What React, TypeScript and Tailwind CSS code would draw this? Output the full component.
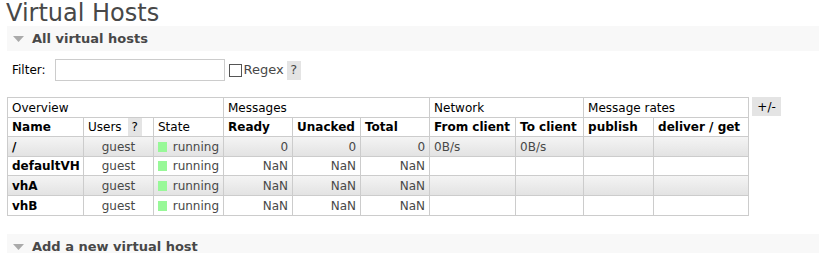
import React from "react";

const font = { fontFamily: '"DejaVu Sans", Verdana, sans-serif' };

function Tri() {
  return (
    <svg width="11" height="6" viewBox="0 0 11 6" className="mr-[8px]">
      <polygon points="0,0 11,0 5.5,6" fill="#aaaaaa" />
    </svg>
  );
}

type Row = {
  name: string;
  ready: string;
  unacked: string;
  total: string;
  from: string;
  to: string;
  h: string;
};

const rows: Row[] = [
  { name: "/", ready: "0", unacked: "0", total: "0", from: "0B/s", to: "0B/s", h: "h-[20px]" },
  { name: "defaultVH", ready: "NaN", unacked: "NaN", total: "NaN", from: "", to: "", h: "h-[19px]" },
  { name: "vhA", ready: "NaN", unacked: "NaN", total: "NaN", from: "", to: "", h: "h-[20px]" },
  { name: "vhB", ready: "NaN", unacked: "NaN", total: "NaN", from: "", to: "", h: "h-[20px]" },
];

export default function App() {
  const td = "border border-[#cccccc] px-[4px] leading-[14px] text-[12px] whitespace-nowrap";
  return (
    <div className="w-[819px] h-[253px] overflow-hidden bg-white text-[#484848]" style={font}>
      <h1 className="pl-[6px] text-[24px] leading-[26px] h-[26px] text-[#484848]">Virtual Hosts</h1>
      <div className="ml-[7px] h-[25px] bg-[#f8f8f8] flex items-center pl-[6px]">
        <Tri />
        <span className="text-[13px] font-bold text-[#484848]">All virtual hosts</span>
      </div>
      <div className="flex items-center h-[22px] mt-[8px] pl-[12px] text-[12px]">
        <span className="text-[#000]">Filter:</span>
        <div className="ml-[9px] w-[170px] h-[22px] border border-[#cccccc] bg-white" />
        <div className="ml-[4px] w-[13px] h-[13px] border border-[#555] bg-white" />
        <span className="ml-[2px] text-[13px]">Regex</span>
        <span className="ml-[3px] w-[14px] h-[19px] bg-[#e4e4e4] flex items-center justify-center text-[13px]">?</span>
      </div>
      <div className="flex items-start mt-[16px] ml-[7px]">
        <table className="border-collapse table-fixed w-[741px]">
          <colgroup>
            <col className="w-[76px]" />
            <col className="w-[70px]" />
            <col className="w-[70px]" />
            <col className="w-[69px]" />
            <col className="w-[68px]" />
            <col className="w-[69px]" />
            <col className="w-[86px]" />
            <col className="w-[68px]" />
            <col className="w-[70px]" />
            <col className="w-[95px]" />
          </colgroup>
          <thead>
            <tr className="h-[20px]">
              <th colSpan={3} className={`${td} text-left font-normal text-[#000]`}>Overview</th>
              <th colSpan={3} className={`${td} text-left font-normal text-[#000]`}>Messages</th>
              <th colSpan={2} className={`${td} text-left font-normal text-[#000]`}>Network</th>
              <th colSpan={2} className={`${td} text-left font-normal text-[#000]`}>Message rates</th>
            </tr>
            <tr className="h-[19px]">
              <th className={`${td} text-left font-bold text-[#000]`}>Name</th>
              <th className={`${td} text-left font-normal text-[#000]`}>
                <span className="flex items-center">
                  Users
                  <span className="ml-[6px] w-[14px] h-[18px] bg-[#e4e4e4] flex items-center justify-center">?</span>
                </span>
              </th>
              <th className={`${td} text-left font-normal text-[#000]`}>State</th>
              <th className={`${td} text-left font-bold text-[#000]`}>Ready</th>
              <th className={`${td} text-left font-bold text-[#000]`}>Unacked</th>
              <th className={`${td} text-left font-bold text-[#000]`}>Total</th>
              <th className={`${td} text-left font-bold text-[#000]`}>From client</th>
              <th className={`${td} text-left font-bold text-[#000]`}>To client</th>
              <th className={`${td} text-left font-bold text-[#000]`}>publish</th>
              <th className={`${td} text-left font-bold text-[#000]`}>deliver / get</th>
            </tr>
          </thead>
          <tbody>
            {rows.map((r, i) => (
              <tr
                key={r.name}
                className={`${r.h} ${i % 2 === 0 ? "bg-gradient-to-b from-[#f4f4f4] to-[#e2e2e2]" : "bg-white"}`}
              >
                <td className={`${td} font-bold text-[#000]`}>{r.name}</td>
                <td className={`${td} text-center`}>guest</td>
                <td className={td}>
                  <span className="flex items-center">
                    <span className="w-[10px] h-[10px] bg-[#98f898] mr-[6px]" />
                    running
                  </span>
                </td>
                <td className={`${td} text-right`}>{r.ready}</td>
                <td className={`${td} text-right`}>{r.unacked}</td>
                <td className={`${td} text-right`}>{r.total}</td>
                <td className={td}>{r.from}</td>
                <td className={td}>{r.to}</td>
                <td className={td}></td>
                <td className={td}></td>
              </tr>
            ))}
          </tbody>
        </table>
        <span className="ml-[3px] w-[29px] h-[19px] bg-[#e4e4e4] flex items-center justify-center text-[12px] text-[#000]">+/-</span>
      </div>
      <div className="ml-[7px] mt-[18px] h-[25px] bg-[#f8f8f8] flex items-center pl-[6px]">
        <Tri />
        <span className="text-[13px] font-bold text-[#484848]">Add a new virtual host</span>
      </div>
    </div>
  );
}
